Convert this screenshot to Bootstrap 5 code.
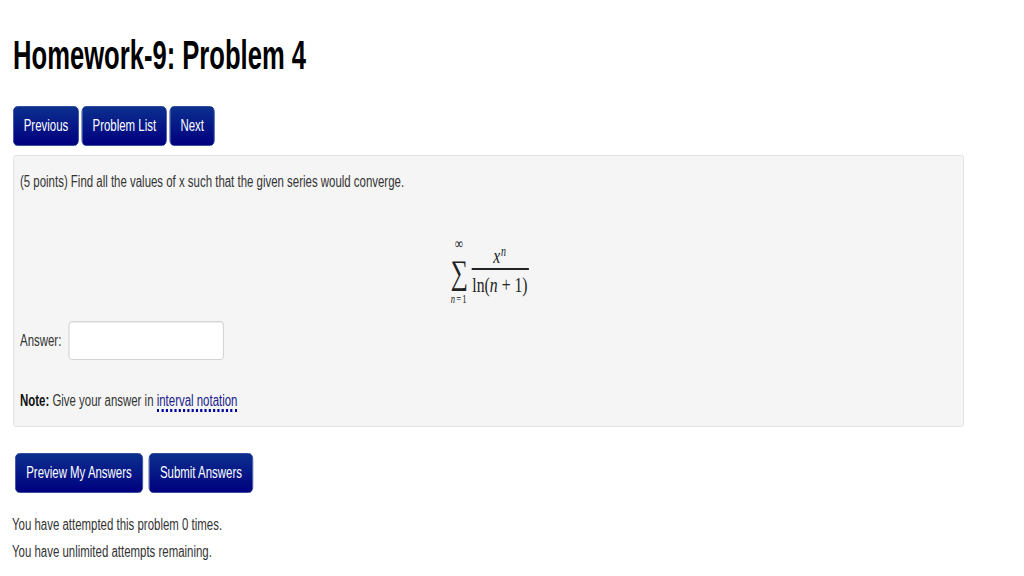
<!DOCTYPE html>
<html lang="en">
<head>
<meta charset="utf-8">
<title>Homework-9: Problem 4</title>
<link rel="stylesheet" href="https://cdn.jsdelivr.net/npm/bootstrap@5.3.0/dist/css/bootstrap.min.css">
<style>
html,body{overflow:hidden;background:#fff}
body{font-family:"Liberation Sans",Arial,sans-serif;font-size:16px;color:#333}
.pagewrap{padding-left:13px;width:1024px}
.narrowed{width:900px;transform:scaleX(.715);transform-origin:0 0}
.ptitle{font-family:"Liberation Sans",Arial,sans-serif;font-weight:700;font-size:40px;line-height:44px;color:#000;margin:33px 0 29px 0;transform:scaleX(.64);transform-origin:0 0;width:900px}
.navy{background:linear-gradient(#0b2f8e,#00007f);color:#fff;border:1px solid #12308a;border-radius:6px;font-size:16px;line-height:22px;padding:8px 14px;height:40px}
.navy:hover{color:#fff}
.navrow{gap:4px;margin-bottom:9px}
.wellbox{width:951px;height:272px;background:#f5f5f5;border:1px solid #e3e3e3;border-radius:3px;padding:14px 6px 0 6px}
.wellbox p{margin:0}
.mathline{height:83px;margin-top:41px;justify-content:center;font-family:"Liberation Serif",serif;color:#222;transform:scaleX(.715)}
.sumcol{width:30px;margin-right:2px}
.sumcol span{display:block}
.lim{font-size:12px;height:14px;line-height:14px;letter-spacing:1.5px;white-space:nowrap;font-family:"Liberation Serif",serif}
.infty{font-size:16px;height:18px;line-height:18px;letter-spacing:0}
.lim i{font-style:italic}
.sig{font-size:34px;height:39px;line-height:39px;font-family:"Liberation Serif",serif}
.frac{width:80px;padding-top:9px}
.numr{font-size:22px;font-style:italic;line-height:24px;height:24px;letter-spacing:1px}
.numr sup{font-size:14px;top:-.5em}
.denr{border-top:2px solid #222;font-size:22px;line-height:30px;white-space:nowrap}
.denr i{font-style:italic}
.ansrow{margin-top:3px;gap:10px}
.ansbox{width:217px;height:39px;border:1px solid #ccc;border-radius:4px;background:#fff;box-shadow:inset 0 1px 1px rgba(0,0,0,.075)}
.wellbox .noteline{margin-top:30px;line-height:22px}
.noteline b{color:#111}
.knowl{color:#1a1a8c;text-decoration:none;border-bottom:3px dotted #00009a}
.actrow{gap:8px;margin:26px 0 0 2px}
.actrow .navy{padding-left:14.7px;padding-right:14.7px}
.foot{margin:18px 0 0 -1px}
.foot p{margin:0;line-height:27px}
</style>
</head>
<body>
<div class="pagewrap">
  <h1 class="ptitle">Homework-9: Problem 4</h1>
  <div class="d-flex navrow narrowed">
    <a href="#" class="btn navy">Previous</a>
    <a href="#" class="btn navy">Problem List</a>
    <a href="#" class="btn navy">Next</a>
  </div>
  <div class="wellbox">
    <p class="narrowed">(5 points) Find all the values of x such that the given series would converge.</p>
    <div class="d-flex mathline">
      <div class="sumcol text-center">
        <span class="lim infty">∞</span>
        <span class="sig">∑</span>
        <span class="lim"><i>n</i>=1</span>
      </div>
      <div class="frac text-center">
        <div class="numr">x<sup>n</sup></div>
        <div class="denr">ln(<i>n</i> + 1)</div>
      </div>
    </div>
    <div class="d-flex align-items-center ansrow narrowed">
      <label for="ans">Answer:</label>
      <input id="ans" class="ansbox" type="text">
    </div>
    <p class="noteline narrowed"><b>Note:</b> Give your answer in <a href="#" class="knowl">interval notation</a></p>
  </div>
  <div class="d-flex actrow narrowed">
    <button type="button" class="btn navy">Preview My Answers</button>
    <button type="button" class="btn navy">Submit Answers</button>
  </div>
  <div class="foot narrowed">
    <p>You have attempted this problem 0 times.</p>
    <p>You have unlimited attempts remaining.</p>
  </div>
</div>
<script src="https://cdn.jsdelivr.net/npm/bootstrap@5.3.0/dist/js/bootstrap.bundle.min.js"></script>
</body>
</html>
